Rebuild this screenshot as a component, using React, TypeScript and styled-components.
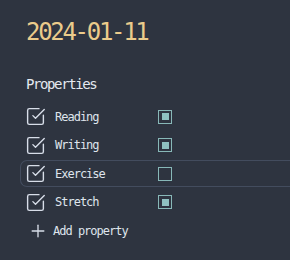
import React from "react";
import styled, { createGlobalStyle } from "styled-components";

const Global = createGlobalStyle`
  html, body { margin: 0; padding: 0; background: #2e3440; }
  body { font-family: "DejaVu Sans Mono", monospace; width: 290px; height: 260px; overflow: hidden; }
`;

const Page = styled.div`
  padding: 15px 0 0 20px;
  display: flex;
  flex-direction: column;
`;

const Title = styled.h1`
  margin: 0 0 0 6px;
  font-family: "DejaVu Sans Mono", monospace;
  font-weight: 400;
  font-size: 24px;
  letter-spacing: -2.3px;
  line-height: 34px;
  color: #ebcb8b;
`;

const Heading = styled.h2`
  margin: 27px 0 0 6px;
  font-family: "DejaVu Sans Mono", monospace;
  font-weight: 400;
  font-size: 14px;
  letter-spacing: -1.4px;
  line-height: 16px;
  color: #e5e9f0;
`;

const List = styled.div`
  margin-top: 11px;
  display: flex;
  flex-direction: column;
  gap: 1.6px;
`;

const Row = styled.div<{ $active?: boolean }>`
  display: flex;
  align-items: center;
  height: 27px;
  box-sizing: border-box;
  padding-left: 4px;
  border: 1px solid ${(p) => (p.$active ? "#434c5e" : "transparent")};
  border-right: none;
  border-radius: 7px 0 0 7px;
  color: #d8dee9;
`;

const Label = styled.span`
  width: 103px;
  margin-left: 9px;
  font-size: 12px;
  letter-spacing: -1px;
  color: #dfe4ec;
`;

const Box = styled.span<{ $checked: boolean }>`
  width: 14px;
  height: 14px;
  box-sizing: border-box;
  border: 1.5px solid #88b8b8;
  display: flex;
  align-items: center;
  justify-content: center;
  &::after {
    content: "";
    width: 7px;
    height: 7px;
    background: ${(p) => (p.$checked ? "#8fc1c1" : "transparent")};
  }
`;

const AddRow = styled.div`
  display: flex;
  align-items: center;
  height: 28px;
  padding-left: 8px;
  color: #d8dee9;
`;

const AddLabel = styled.span`
  margin-left: 5px;
  font-size: 12px;
  letter-spacing: -1px;
  color: #dfe4ec;
`;

const CheckIcon = () => (
  <svg width="21" height="21" viewBox="0 0 24 24" fill="none" stroke="#d8dee9" strokeWidth="1.6" strokeLinecap="round" strokeLinejoin="round">
    <path d="M21 10.5V19a2 2 0 0 1-2 2H5a2 2 0 0 1-2-2V5a2 2 0 0 1 2-2h11" />
    <path d="m9 11 3 3L22 4" />
  </svg>
);

const PlusIcon = () => (
  <svg width="20" height="20" viewBox="0 0 24 24" fill="none" stroke="#d8dee9" strokeWidth="1.6" strokeLinecap="round">
    <path d="M5 12h14" />
    <path d="M12 5v14" />
  </svg>
);

const items = [
  { name: "Reading", checked: true },
  { name: "Writing", checked: true },
  { name: "Exercise", checked: false, active: true },
  { name: "Stretch", checked: true },
];

export default function App() {
  return (
    <>
      <Global />
      <Page>
        <Title>2024-01-11</Title>
        <Heading>Properties</Heading>
        <List>
          {items.map((it) => (
            <Row key={it.name} $active={it.active}>
              <CheckIcon />
              <Label>{it.name}</Label>
              <Box $checked={it.checked} />
            </Row>
          ))}
          <AddRow>
            <PlusIcon />
            <AddLabel>Add property</AddLabel>
          </AddRow>
        </List>
      </Page>
    </>
  );
}
